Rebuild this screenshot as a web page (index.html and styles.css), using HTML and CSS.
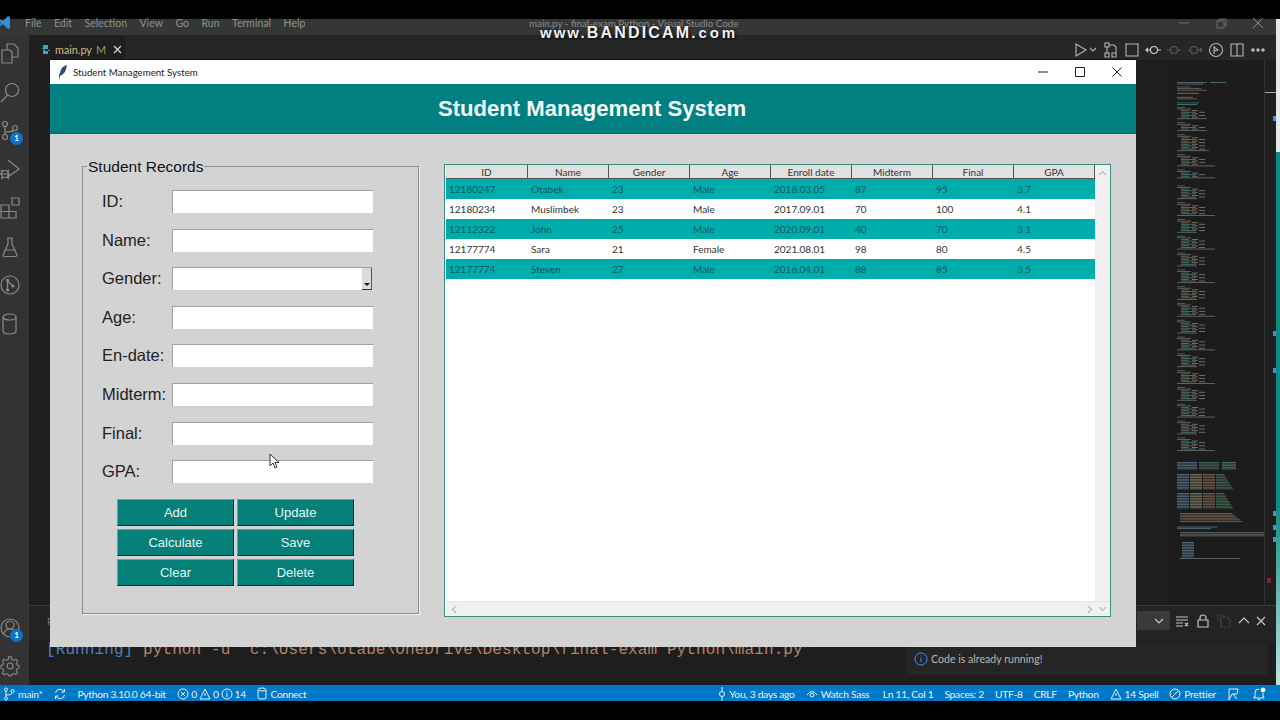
FILE: index.html
```html
<!DOCTYPE html>
<html>
<head>
    <title>Student Management System</title>
    <meta http-equiv="Content-Type" content="text/html; charset=utf-8">
    <link rel="stylesheet" href="styles.css">
</head>
<body>
    <div class="desktop">
        <div class="letterbox"></div>
        <div class="vscode">
            <div class="code-titlebar">
                <svg class="code-logo" width="12" height="14" viewBox="0 0 12 14"><path d="M0 4l3 3-3 3 1 1 4-3 5 5 2-1V1L10 0 5 5 1 3z" fill="#2f8fd8"/></svg>
                <div class="code-menu">
                    <span>File</span><span>Edit</span><span>Selection</span><span>View</span><span>Go</span><span>Run</span><span>Terminal</span><span>Help</span>
                </div>
                <div class="code-title">main.py - final-exam Python - Visual Studio Code</div>
                <div class="code-controls">
                    <svg width="12" height="12" viewBox="0 0 12 12"><path d="M1 6h10" stroke="#6e6e6e"/></svg>
                    <svg width="12" height="12" viewBox="0 0 12 12" fill="none" stroke="#6e6e6e"><path d="M2 4h7v7H2zM4 4V2h7v7H9"/></svg>
                    <svg width="12" height="12" viewBox="0 0 12 12"><path d="M1 1l10 10M11 1L1 11" stroke="#8a8a8a"/></svg>
                </div>
            </div>

            <div class="code-workspace">
                <div class="activity-bar">
                    <svg viewBox="0 0 20 22"><path d="M7 7V1h7l4 4v9h-6M2 7h8l2 2v11H2z"/></svg>
                    <svg viewBox="0 0 20 22"><circle cx="12" cy="8" r="6.5"/><path d="M7.500 13L1 20"/></svg>
                    <div class="activity-icon">
                        <svg viewBox="0 0 20 22"><circle cx="5" cy="4" r="2.5"/><circle cx="5" cy="17" r="2.5"/><circle cx="15" cy="8" r="2.5"/><path d="M5 6.500v8M5 12c5 0 8-.5 9.500-2"/></svg>
                        <span class="activity-badge">1</span>
                    </div>
                    <svg viewBox="0 0 20 22"><path d="M8 1l11 9-11 8v-4"/><circle cx="5" cy="15" r="3.500"/><path d="M0 15h10M1 11l2 2M9 11l-2 2M1 20l2-2M9 20l-2-2"/></svg>
                    <svg viewBox="0 0 20 22"><path d="M1 8h8v13H1zM1 14.500h15V21H9M9 8v6.500"/><path d="M12 1h7v7h-7z"/></svg>
                    <svg viewBox="0 0 20 22"><path d="M7 2h6M8 2v6L3 19q0 1.500 2 1.500h10q2 0 2-1.500L12 8V2M5.500 14h9"/></svg>
                    <svg viewBox="0 0 20 22"><circle cx="10" cy="11" r="9"/><circle cx="7.500" cy="6" r="1" fill="#8a8a8a"/><circle cx="7.500" cy="16" r="1" fill="#8a8a8a"/><circle cx="13" cy="12" r="1" fill="#8a8a8a"/><path d="M7.500 6v10M7.500 7l5.500 5"/></svg>
                    <svg viewBox="0 0 20 22"><path d="M3 4v14q0 3 6.500 3t6.500-3V4"/><ellipse cx="9.500" cy="4" rx="6.500" ry="3"/></svg>
                    <div class="activity-spacer"></div>
                    <div class="activity-icon">
                        <svg viewBox="0 0 20 22"><circle cx="10" cy="11" r="9"/><circle cx="10" cy="8" r="4"/><path d="M3.500 17q2-5 6.500-5t6.500 5"/></svg>
                        <span class="activity-badge">1</span>
                    </div>
                    <svg viewBox="0 0 20 22"><circle cx="10" cy="11" r="3"/><path d="M8.500 1h3l.5 3 2 1 2.500-1.500 2 2L17 8l1 2 2 .5v3l-2 .5-1 2 1.500 2.500-2 2L14 19.500l-2 1-.5 1.500h-3l-.5-1.500-2-1-2.500 1.500-2-2L3 16l-1-2-2-.5v-3l2-.5 1-2-1.500-2.500 2-2L6 5l2-1z" transform="translate(1 1) scale(.9)"/></svg>
                </div>

                <div class="code-main">
                    <div class="tab-row">
                        <div class="tab">
                            <svg class="py-icon" width="11" height="11" viewBox="0 0 11 11"><path d="M3 1h5v4H3z" fill="#4d9ac4"/><path d="M1 4h4v3h5v-1H5zM3 6h5v4H3z" fill="#4d9ac4"/></svg>
                            <span class="tab-name">main.py</span>
                            <span class="tab-mark">M</span>
                            <svg class="tab-close" width="9" height="9" viewBox="0 0 9 9"><path d="M1 1l7 7M8 1L1 8" stroke="#d4d4d4" stroke-width="1.300"/></svg>
                        </div>
                        <div class="tab-tools">
                            <svg width="14" height="16" viewBox="0 0 14 16"><path d="M2 2l10 6-10 6z"/></svg>
                            <svg class="tool-chevron" width="8" height="16" viewBox="0 0 8 16"><path d="M1 6l3 3 3-3"/></svg>
                            <svg width="16" height="16" viewBox="0 0 16 16"><path d="M2 1h4v4H2zM4 5v6M6 3h5l2 2v6M9 11h4v4H9zM2 11h4v4H2z"/></svg>
                            <svg width="16" height="16" viewBox="0 0 16 16"><path d="M2 2h12v12H2z"/></svg>
                            <svg class="tool-bright" width="16" height="16" viewBox="0 0 16 16"><circle cx="9" cy="8" r="3.500"/><path d="M5 8H1M3 6L1 8l2 2M13 8h3"/></svg>
                            <svg class="tool-dim" width="16" height="16" viewBox="0 0 16 16"><circle cx="8" cy="8" r="3.500"/><path d="M1 8h3M12 8h3"/></svg>
                            <svg class="tool-dim" width="16" height="16" viewBox="0 0 16 16"><circle cx="7" cy="8" r="3.500"/><path d="M1 8h2M11 8h4M13 6l2 2-2 2"/></svg>
                            <svg width="16" height="16" viewBox="0 0 16 16"><circle cx="8" cy="8" r="6.500"/><path d="M6 4v8M6 5l4 3-4 1"/></svg>
                            <svg width="16" height="16" viewBox="0 0 16 16"><path d="M2 2h12v12H2zM8 2v12"/></svg>
                            <svg width="16" height="16" viewBox="0 0 16 16"><circle cx="3" cy="8" r="1.200" fill="#c5c5c5"/><circle cx="8" cy="8" r="1.200" fill="#c5c5c5"/><circle cx="13" cy="8" r="1.200" fill="#c5c5c5"/></svg>
                        </div>
                    </div>

                    <div class="editor">
                        <div class="editor-text"></div>
                        <svg class="minimap" id="minimap" width="94" height="545" viewBox="0 0 94 545"></svg>
                        <div class="overview">
                            <span class="overview-slider"></span>
                            <span class="overview-mark mark-1"></span>
                            <span class="overview-mark mark-2"></span>
                            <span class="overview-mark mark-3"></span>
                            <span class="overview-mark mark-4"></span>
                            <span class="overview-mark mark-5"></span>
                            <span class="overview-mark mark-6"></span>
                            <span class="overview-error"></span>
                        </div>
                    </div>

                    <div class="panel">
                        <div class="panel-head">
                            <span class="panel-tab">PROBLEMS</span>
                            <div class="panel-tools">
                                <div class="panel-select">
                                    <svg width="12" height="12" viewBox="0 0 12 12" fill="none" stroke="#c5c5c5" stroke-width="1.200"><path d="M2 4l4 4 4-4"/></svg>
                                </div>
                                <svg width="14" height="14" viewBox="0 0 14 14" fill="none" stroke="#c5c5c5" stroke-width="1.200"><path d="M1 3h12M1 6h12M1 9h7M1 12h7M10 9l3 3M13 9l-3 3"/></svg>
                                <svg width="14" height="14" viewBox="0 0 14 14" fill="none" stroke="#c5c5c5" stroke-width="1.200"><path d="M2 6h10v7H2zM4 6V4q0-3 3-3t3 3v2"/></svg>
                                <svg width="14" height="14" viewBox="0 0 14 14" fill="none" stroke="#3d3d3d" stroke-width="1.200"><path d="M4 3h6l3 3v7H4zM4 6H1V1h6v2"/></svg>
                                <svg width="12" height="12" viewBox="0 0 12 12" fill="none" stroke="#c5c5c5" stroke-width="1.200"><path d="M1 8l5-5 5 5"/></svg>
                                <svg class="panel-close" width="12" height="12" viewBox="0 0 12 12" fill="none" stroke="#c5c5c5" stroke-width="1.200"><path d="M2 2l8 8M10 2l-8 8"/></svg>
                            </div>
                        </div>
                        <div class="panel-body">
                            <div class="term-line"><span class="term-running">[Running]</span> python -u "c:\Users\otabe\OneDrive\Desktop\final-exam Python\main.py"</div>
                        </div>
                    </div>
                </div>
            </div>

            <div class="status-bar">
                <div class="status-group status-left">
                    <span class="status-item"><svg width="12" height="14" viewBox="0 0 12 14"><circle cx="3" cy="2.500" r="1.500"/><circle cx="3" cy="11.500" r="1.500"/><circle cx="9.500" cy="4" r="1.500"/><path d="M3 4v6M3 8q6 0 6.500-2.500"/></svg>main*</span>
                    <span class="status-item"><svg width="12" height="12" viewBox="0 0 12 12"><path d="M1.500 5a4.500 4.500 0 0 1 8-2l1 1M10.500 7a4.500 4.500 0 0 1-8 2l-1-1M10.500 1v3h-3M1.500 11V8h3"/></svg></span>
                    <span class="status-item">Python 3.10.0 64-bit</span>
                    <span class="status-item problem-item">
                        <svg width="12" height="12" viewBox="0 0 12 12"><circle cx="6" cy="6" r="5"/><path d="M4 4l4 4M8 4l-4 4"/></svg>0
                        <svg width="12" height="12" viewBox="0 0 12 12"><path d="M6 1l5 10H1zM6 5v3"/></svg>0
                        <svg width="12" height="12" viewBox="0 0 12 12"><circle cx="6" cy="6" r="5"/><path d="M6 5v4M6 3v1"/></svg>14
                    </span>
                    <span class="status-item"><svg width="10" height="13" viewBox="0 0 10 13"><path d="M1 3v8q0 1 4 1t4-1V3"/><ellipse cx="5" cy="2.500" rx="4" ry="1.500"/></svg>Connect</span>
                </div>
                <div class="status-group status-right">
                    <span class="status-item"><svg width="8" height="14" viewBox="0 0 8 14"><circle cx="4" cy="7" r="2.500"/><path d="M4 0v4.500M4 9.500V14"/></svg>You, 3 days ago</span>
                    <span class="status-item watch-item"><svg width="12" height="10" viewBox="0 0 12 10"><path d="M1 6q5-7 10 0"/><circle cx="6" cy="6" r="2"/></svg>Watch Sass</span>
                    <span class="status-item">Ln 11, Col 1</span>
                    <span class="status-item">Spaces: 2</span>
                    <span class="status-item">UTF-8</span>
                    <span class="status-item">CRLF</span>
                    <span class="status-item">Python</span>
                    <span class="status-item"><svg width="12" height="12" viewBox="0 0 12 12"><path d="M6 1l5 10H1zM6 5v3"/></svg>14 Spell</span>
                    <span class="status-item"><svg width="12" height="12" viewBox="0 0 12 12"><circle cx="6" cy="6" r="5"/><path d="M2.500 9.500l7-7"/></svg>Prettier</span>
                    <span class="status-item"><svg width="14" height="14" viewBox="0 0 14 14"><path d="M2 2h9l-1 5H5l-3 6zM6 7l4 5"/></svg></span>
                    <span class="status-item"><svg width="14" height="14" viewBox="0 0 14 14"><path d="M7 2Q3 2 3 6v4H2v1h10v-1h-1V6M6 12.500h2"/><circle cx="11" cy="3" r="2" fill="#fff"/></svg></span>
                </div>
            </div>
        </div>
        <div class="letterbox-bottom"></div>

        <div class="desktop-edge"></div>

        <div class="toast">
            <svg width="14" height="14" viewBox="0 0 14 14" fill="none" stroke="#3794ff"><circle cx="7" cy="7" r="6"/><path d="M7 6v4M7 3.500v1"/></svg>
            <span>Code is already running!</span>
        </div>

        <div class="watermark"><span class="wm-small">www.</span><span class="wm-big">BANDICAM</span><span class="wm-tail">.com</span></div>

        <div class="tk-window">
            <div class="tk-titlebar">
                <svg class="tk-feather" width="10" height="15" viewBox="0 0 10 15"><path d="M9 0Q3 1 2 8L1 10l0 5 1-4q5-2 6-7z" fill="#2f4f6f"/></svg>
                <span class="tk-title">Student Management System</span>
                <div class="tk-controls">
                    <svg width="10" height="10" viewBox="0 0 10 10"><path d="M0 5h10" stroke="#222"/></svg>
                    <svg width="10" height="10" viewBox="0 0 10 10"><path d="M.5.500h9v9h-9z" fill="none" stroke="#222"/></svg>
                    <svg width="10" height="10" viewBox="0 0 10 10"><path d="M.5.500l9 9M9.500.500l-9 9" stroke="#222"/></svg>
                </div>
            </div>
            <div class="tk-header">Student Management System</div>
            <div class="tk-body">
                <fieldset class="records">
                    <legend>Student Records</legend>
                    <div class="form-grid">
                        <label>ID:</label><input class="entry" type="text">
                        <label>Name:</label><input class="entry" type="text">
                        <label>Gender:</label>
                        <div class="entry combo"><span class="combo-arrow"></span></div>
                        <label>Age:</label><input class="entry" type="text">
                        <label>En-date:</label><input class="entry" type="text">
                        <label>Midterm:</label><input class="entry" type="text">
                        <label>Final:</label><input class="entry" type="text">
                        <label>GPA:</label><input class="entry" type="text">
                    </div>
                    <div class="button-grid">
                        <button>Add</button><button>Update</button>
                        <button>Calculate</button><button>Save</button>
                        <button>Clear</button><button>Delete</button>
                    </div>
                </fieldset>

                <div class="table-frame">
                    <div class="table-area">
                        <table class="records-table">
                            <thead>
                                <tr><th>ID</th><th>Name</th><th>Gender</th><th>Age</th><th>Enroll date</th><th>Midterm</th><th>Final</th><th>GPA</th></tr>
                            </thead>
                            <tbody>
                                <tr class="row-teal"><td>12180247</td><td>Otabek</td><td>23</td><td>Male</td><td>2018.03.05</td><td>87</td><td>95</td><td>3.7</td></tr>
                                <tr><td>12180234</td><td>Muslimbek</td><td>23</td><td>Male</td><td>2017.09.01</td><td>70</td><td>100</td><td>4.1</td></tr>
                                <tr class="row-teal"><td>12112322</td><td>John</td><td>25</td><td>Male</td><td>2020.09.01</td><td>40</td><td>70</td><td>3.1</td></tr>
                                <tr><td>12177774</td><td>Sara</td><td>21</td><td>Female</td><td>2021.08.01</td><td>98</td><td>80</td><td>4.5</td></tr>
                                <tr class="row-teal"><td>12177774</td><td>Steven</td><td>27</td><td>Male</td><td>2016.04.01</td><td>88</td><td>85</td><td>3.5</td></tr>
                            </tbody>
                        </table>
                    </div>
                    <div class="scroll-v">
                        <svg width="9" height="6" viewBox="0 0 9 6"><path d="M1 5l3.500-3.500L8 5"/></svg>
                    </div>
                    <div class="scroll-h">
                        <svg width="6" height="9" viewBox="0 0 6 9"><path d="M5 1L1.500 4.500 5 8"/></svg>
                        <svg width="6" height="9" viewBox="0 0 6 9"><path d="M1 1l3.500 3.500L1 8"/></svg>
                    </div>
                    <div class="scroll-corner">
                        <svg width="9" height="6" viewBox="0 0 9 6"><path d="M1 1l3.500 3.500L8 1"/></svg>
                    </div>
                </div>
            </div>
        </div>

        <!-- mouse pointer -->
        <svg class="pointer" width="12" height="17" viewBox="0 0 12 17"><path d="M1 1v12l3-3 2 5 2-1-2-4.500h4z" fill="#fff" stroke="#333"/></svg>
    </div>

    <script src="minimap.js"></script>
</body>
</html>
```

FILE: styles.css
```css
body, html {
    height: 100%;
    margin: 0;
    background: #000;
    overflow: hidden;
    font-family: "Lato", "Open Sans", sans-serif;
}

.desktop {
    position: relative;
    width: 1280px;
    height: 720px;
    display: flex;
    flex-direction: column;
}

.letterbox {
    height: 19px;
    background: #000;
}

.letterbox-bottom {
    height: 19px;
    background: #000;
}

.vscode {
    height: 682px;
    display: flex;
    flex-direction: column;
    background: #1e1e1e;
}

/* vscode title bar, cut off at the top by the video frame */
.code-titlebar {
    height: 16px;
    box-sizing: border-box;
    padding-bottom: 8px;
    display: flex;
    align-items: center;
    background: #353737;
    color: #8f8f8f;
    font-size: 10.5px;
}

.code-logo {
    margin-left: -2px;
    flex: none;
}

.code-menu {
    display: flex;
    gap: 12.5px;
    margin-left: 15px;
}

.code-title {
    position: absolute;
    left: 529px;
    color: #8a8a8a;
    font-size: 9.8px;
}

.code-controls {
    margin-left: auto;
    display: flex;
    gap: 25px;
    padding-right: 16px;
}

/* workspace */
.code-workspace {
    flex: 1;
    display: flex;
    min-height: 0;
}

.activity-bar {
    width: 29px;
    flex: none;
    display: flex;
    flex-direction: column;
    gap: 16.5px;
    padding-top: 8px;
    padding-bottom: 8px;
    box-sizing: border-box;
    background: #333;
}

.activity-bar svg {
    width: 20px;
    height: 22px;
    fill: none;
    stroke: #8a8a8a;
    stroke-width: 1.200;
    display: block;
}

.activity-icon {
    position: relative;
    height: 22px;
}

.activity-badge {
    position: absolute;
    left: 10px;
    top: 12px;
    width: 13px;
    height: 13px;
    border-radius: 50%;
    background: #0f74c8;
    color: #fff;
    font-size: 8px;
    font-weight: 700;
    line-height: 13px;
    text-align: center;
}

.activity-spacer {
    flex: 1;
}

.code-main {
    flex: 1;
    min-width: 0;
    display: flex;
    flex-direction: column;
}

.tab-row {
    height: 25px;
    flex: none;
    display: flex;
    align-items: center;
    background: #252727;
}

.tab {
    width: 96px;
    height: 25px;
    box-sizing: border-box;
    padding: 3px 0 0 11px;
    display: flex;
    align-items: center;
    background: #1f1f1f;
    font-size: 10.8px;
}

.py-icon {
    flex: none;
}

.tab-name {
    margin-left: 4px;
    color: #d7ba7d;
}

.tab-mark {
    margin-left: 4px;
    color: #a8925c;
}

.tab-close {
    margin-left: 7px;
}

.tab-tools {
    margin-left: auto;
    display: flex;
    align-items: center;
    gap: 5px;
    padding: 4px 14px 0 0;
}

.tab-tools svg {
    fill: none;
    stroke: #b5b5b5;
    stroke-width: 1.100;
}

.tab-tools .tool-chevron {
    margin-left: -4px;
    margin-right: 1px;
}

.tab-tools .tool-dim {
    stroke: #5c5c5c;
}

.tab-tools .tool-bright {
    stroke: #d0d0d0;
}

.editor {
    flex: 1;
    min-height: 0;
    display: flex;
    background: #1e1e1e;
}

.editor-text {
    flex: 1;
}

.minimap {
    flex: none;
    display: block;
    background: #1c1c1c;
}

.overview {
    position: relative;
    width: 15px;
    flex: none;
    border-left: 1px solid #333;
}

.overview-slider {
    position: absolute;
    left: 0;
    right: 4px;
    top: 32px;
    height: 1px;
    background: #a8a8a8;
}

.overview-mark {
    position: absolute;
    right: 4px;
    width: 3px;
    height: 5px;
    background: #3f8fe8;
}

.mark-1 { top: 56px; }
.mark-2 { top: 271px; }
.mark-3 { top: 308px; }
.mark-4 { top: 451px; }
.mark-5 { top: 465px; }
.mark-6 { top: 477px; }

.overview-error {
    position: absolute;
    left: 2px;
    top: 518px;
    width: 4px;
    height: 5px;
    background: #7a2030;
}

/* bottom panel */
.panel {
    height: 80px;
    flex: none;
    display: flex;
    flex-direction: column;
    border-top: 1px solid #3a3a3a;
    box-sizing: border-box;
    background: #1e1e1e;
}

.panel-head {
    height: 35px;
    flex: none;
    box-sizing: border-box;
    padding: 0 0 6px 18px;
    display: flex;
    align-items: center;
    background: #232323;
    color: #777;
    font-size: 10px;
}

.panel-tools {
    margin-left: auto;
    display: flex;
    align-items: center;
    gap: 7px;
    padding-right: 13px;
}

.panel-select {
    width: 33px;
    height: 19px;
    display: flex;
    align-items: center;
    justify-content: flex-end;
    padding-right: 5px;
    box-sizing: border-box;
    margin-right: -2px;
    background: #3a3a3a;
}

.panel-close {
    margin-left: -2px;
}

.panel-body {
    flex: 1;
    padding-left: 17px;
    font-family: "Liberation Mono", monospace;
    font-size: 16px;
    line-height: 18px;
    color: #b8835f;
}

.term-line {
    letter-spacing: 0.1px;
    white-space: pre;
}

.term-running {
    color: #4b7dc4;
}

/* status bar */
.status-bar {
    height: 16px;
    flex: none;
    box-sizing: border-box;
    padding: 1px 14px 0 3px;
    display: flex;
    justify-content: space-between;
    align-items: center;
    background: #0078c8;
    color: #e6f2fa;
    font-size: 10.3px;
    letter-spacing: -0.3px;
    white-space: nowrap;
}

.status-group {
    display: flex;
    align-items: center;
}

.status-left {
    gap: 11.5px;
}

.status-right {
    gap: 11px;
}

.status-item {
    display: flex;
    align-items: center;
    gap: 3px;
}

.status-left .problem-item {
    gap: 2px;
}

.status-right .watch-item {
    margin-right: 2.5px;
}

.status-item svg {
    fill: none;
    stroke: #e6f2fa;
    stroke-width: 1;
    flex: none;
}

/* pieces lying on top of the editor */
.desktop-edge {
    position: absolute;
    right: 0;
    top: 19px;
    bottom: 35px;
    width: 4px;
    background: linear-gradient(#e8e8e8 0, #e8e8e8 133px, #0a8a80 133px, #0a8a80 480px, #bfe3df 100%);
}

.toast {
    position: absolute;
    left: 906px;
    top: 642px;
    width: 362px;
    height: 33px;
    box-sizing: border-box;
    padding-left: 8px;
    display: flex;
    align-items: center;
    gap: 3px;
    background: #252526;
    color: #b5b5b5;
    font-size: 10.6px;
}

.watermark {
    position: absolute;
    left: 540px;
    top: 23px;
    display: flex;
    align-items: baseline;
    color: #f0f0f0;
    font-family: "Liberation Sans", sans-serif;
    font-weight: 700;
    line-height: 19px;
    text-shadow: 1px 1px 3px #000;
}

.wm-small {
    font-size: 15px;
    letter-spacing: 2px;
}

.wm-big {
    font-size: 16px;
    letter-spacing: 2.200px;
}

.wm-tail {
    font-size: 15px;
    letter-spacing: 2.900px;
}

/* tkinter window */
.tk-window {
    position: absolute;
    left: 50px;
    top: 60px;
    width: 1086px;
    height: 587px;
    display: flex;
    flex-direction: column;
    background: #d3d3d3;
    box-shadow: 0 -1px 0 #111;
}

.tk-titlebar {
    height: 24px;
    flex: none;
    display: flex;
    align-items: center;
    padding-left: 8px;
    background: #fff;
    color: #222;
    font-size: 9.7px;
}

.tk-feather {
    flex: none;
}

.tk-title {
    margin-left: 5px;
}

.tk-controls {
    margin-left: auto;
    display: flex;
    gap: 27px;
    padding-right: 14px;
}

.tk-header {
    height: 50px;
    flex: none;
    display: flex;
    align-items: center;
    justify-content: center;
    padding-right: 2px;
    background: #008080;
    border-bottom: 1px solid #0a6e6b;
    box-sizing: border-box;
    color: #f4fbfa;
    font-family: "Liberation Sans", sans-serif;
    font-size: 22.1px;
    font-weight: 700;
}

.tk-body {
    flex: 1;
    display: flex;
    align-items: flex-start;
    gap: 25px;
    padding: 22px 0 0 32px;
    font-family: "Liberation Sans", sans-serif;
}

.records {
    width: 337px;
    height: 458px;
    margin: 0;
    box-sizing: border-box;
    padding: 14px 0 0 19px;
    border: 1px solid #8d8d8d;
    box-shadow: 1px 1px 0 #f4f4f4;
}

.records legend {
    margin-left: -15px;
    padding: 2px 1px 0;
    font-size: 15.500px;
    line-height: 18px;
    color: #111;
}

.form-grid {
    display: grid;
    grid-template-columns: 70px 201px;
    grid-auto-rows: 23px;
    row-gap: 15.6px;
    align-items: center;
}

.form-grid label {
    font-size: 16.500px;
    color: #222;
}

.entry {
    height: 23px;
    width: 201px;
    margin: 0;
    padding: 0;
    box-sizing: border-box;
    background: #fff;
    border: 0;
    border-top: 1px solid #a0a0a0;
    border-left: 1px solid #a0a0a0;
    outline: none;
}

.combo {
    width: 200px;
    display: flex;
    justify-content: flex-end;
    border-top-color: #a0a0a0;
}

.combo-arrow {
    position: relative;
    width: 10px;
    box-sizing: border-box;
    background: #dcdcdc;
    border-right: 1px solid #555;
    border-bottom: 1px solid #333;
}

.combo-arrow::after {
    content: "";
    position: absolute;
    left: 2px;
    bottom: 3px;
    border-left: 3px solid transparent;
    border-right: 3px solid transparent;
    border-top: 3px solid #111;
}

.button-grid {
    display: grid;
    grid-template-columns: 117px 117px;
    grid-auto-rows: 27px;
    gap: 3px;
    margin: 16px 0 0 15px;
}

.button-grid button {
    margin: 0;
    padding: 0;
    background: #058078;
    border: 1px solid;
    border-color: #5aa8a2 #0b2f2c #0b2f2c #5aa8a2;
    color: #e4f6f3;
    font-family: "Liberation Sans", sans-serif;
    font-size: 13px;
}

/* table */
.table-frame {
    width: 667px;
    height: 453px;
    margin-top: 8px;
    box-sizing: border-box;
    padding-left: 1px;
    display: grid;
    grid-template-columns: 649px 15px;
    grid-template-rows: 436px 15px;
    border: 1px solid #3d8a85;
    background: #fff;
}

.table-area {
    overflow: hidden;
    background: #fff;
}

.records-table {
    width: 649px;
    table-layout: fixed;
    border-collapse: separate;
    border-spacing: 0;
    font-family: "Lato", sans-serif;
    font-size: 10px;
}

.records-table th {
    width: 81px;
    height: 14px;
    padding: 0;
    box-sizing: border-box;
    background: #e1e1e1;
    border-right: 1px solid #555;
    border-bottom: 1px solid #555;
    color: #333;
    font-weight: 400;
    line-height: 12px;
    text-align: center;
}

.records-table th:first-child {
    width: 82px;
}

.records-table td {
    height: 20px;
    padding: 0 0 0 3px;
    box-sizing: border-box;
    color: #333;
    white-space: nowrap;
}

.row-teal td {
    background: #00adad;
    color: #075a5e;
}

.scroll-v {
    display: flex;
    justify-content: center;
    align-items: flex-start;
    padding-top: 5px;
    background: #f0f0f0;
}

.scroll-h {
    display: flex;
    justify-content: space-between;
    align-items: center;
    padding: 0 2px 0 5px;
    background: #f0f0f0;
    border-top: 1px solid #e4e4e4;
}

.scroll-corner {
    display: flex;
    justify-content: center;
    align-items: center;
    background: #f0f0f0;
    border-top: 1px solid #e4e4e4;
}

.scroll-v svg,
.scroll-h svg,
.scroll-corner svg {
    fill: none;
    stroke: #bcbcbc;
    stroke-width: 1.200;
}

.pointer {
    position: absolute;
    left: 269px;
    top: 453px;
}
```

FILE: minimap.js
```js
// draws the little code lines of the minimap
const minimap = document.getElementById('minimap');
const grey = '#9a9a9a', blue = '#6fa8c8', green = '#5f9a7a', orange = '#b08a6a', yellow = '#b8b48a', cyan = '#5fb0b0';
let parts = '';
let y = 0;

function line(x, width, color) {
    parts += '<rect x="' + (x + 2) + '" y="' + y + '" width="' + width + '" height="0.9" fill="' + color + '" opacity="0.6"/>';
}

function next(step) {
    y += step || 1.6;
}

// little form block, repeats most of the way down
function formBlock(count, tail) {
    line(5, 8, green); next();
    line(5, 14, grey); next();
    for (let i = 0; i < count; i++) {
        line(9, 8 + (i * 7) % 14, i % 3 ? cyan : orange);
        line(20 + (i * 7) % 14, 6, yellow);
        next();
    }
    line(5, tail, grey); next(4);
}

y = 22;
line(5, 30, grey); line(38, 16, blue); next();
line(5, 26, blue); next(3);
line(5, 14, green); next();
line(5, 24, grey); next();
line(5, 30, orange); next(3);
line(5, 22, yellow); next(4);
line(5, 16, grey); next();
line(5, 20, grey); next(4);
line(5, 22, green); next();
line(5, 20, cyan); next(3);
formBlock(5, 30);
formBlock(3, 30);
formBlock(8, 32);
formBlock(5, 38);
formBlock(3, 38);
y += 4;
for (let i = 0; y < 380; i++) {
    formBlock(6, i % 2 ? 38 : 20);
}

// the dense table part at the end of the file
y = 402;
for (let i = 0; i < 5; i++) {
    line(5, 20, blue); line(27, 20, green); line(50, 14, cyan); next();
}
next(4);
for (let i = 0; i < 10; i++) {
    line(5, 12, blue); line(18, 12, yellow); line(31, 12, orange); line(44, 8 + i, green); next();
}
next(3);
for (let i = 0; i < 10; i++) {
    line(5, 12, blue); line(18, 12, yellow); line(31, 12, orange); line(44, 8 + i, green); next();
}
next(4);
for (let i = 0; i < 6; i++) {
    line(8, 52 + i * 2, orange); next();
}
next(4);
line(5, 40, cyan); next(); line(5, 34, blue); next(4);
for (let i = 0; i < 3; i++) {
    line(8, 84, grey); next();
}
next(5);
for (let i = 0; i < 10; i++) {
    line(10, 12, blue); next();
}
line(8, 60, grey); next();

minimap.innerHTML = parts;
```
